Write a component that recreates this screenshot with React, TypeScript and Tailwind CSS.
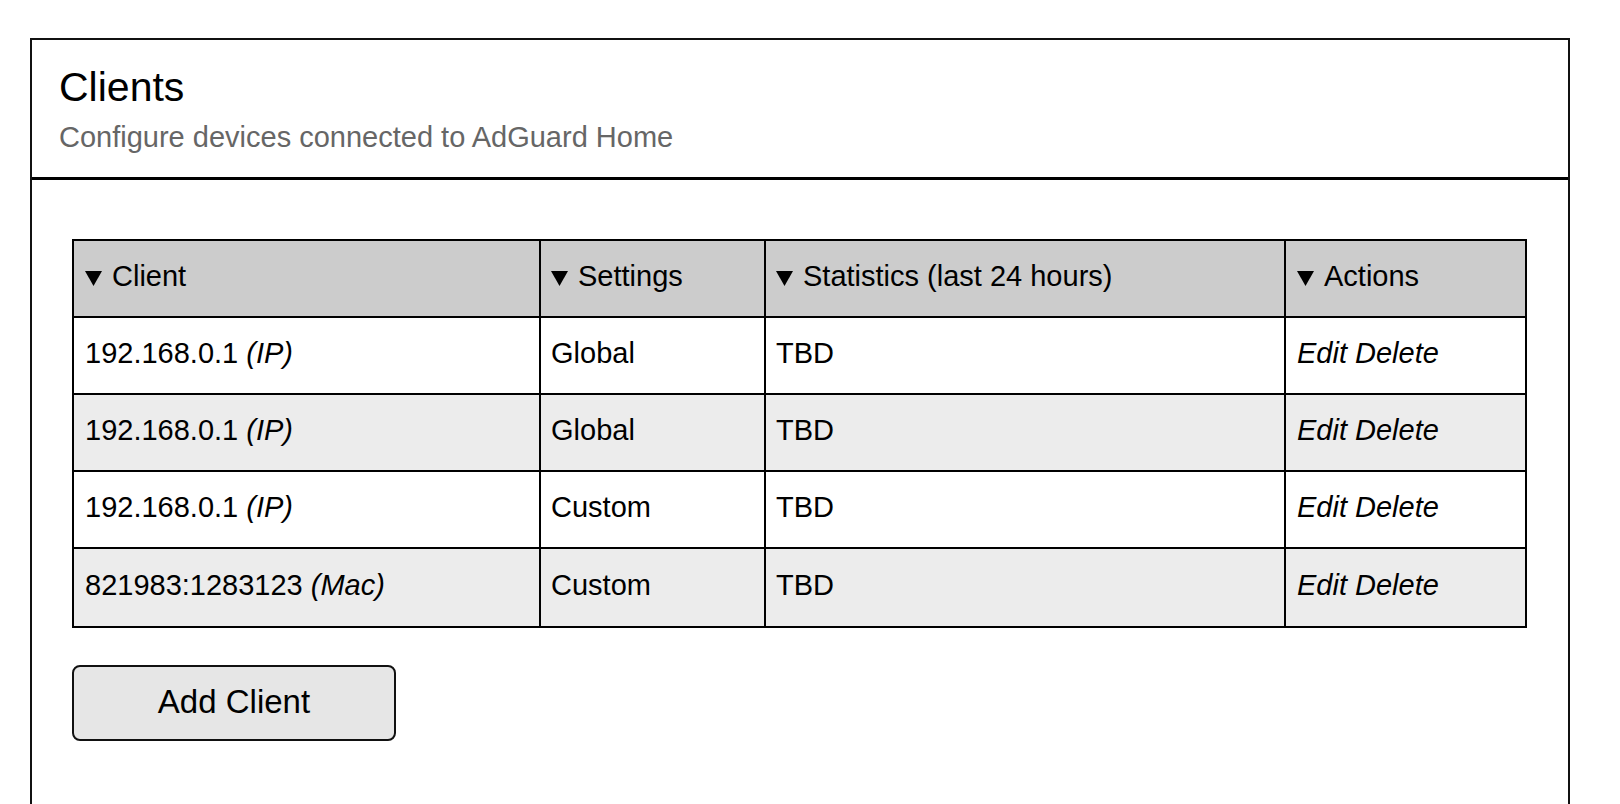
import React from "react";

const Tri = () => (
  <svg width="17" height="15" viewBox="0 0 17 15" className="inline-block mr-[10px] align-baseline">
    <polygon points="0,0 17,0 8.5,15" fill="#000" />
  </svg>
);

type Row = { client: string; kind: string; settings: string };

const rows: Row[] = [
  { client: "192.168.0.1", kind: "(IP)", settings: "Global" },
  { client: "192.168.0.1", kind: "(IP)", settings: "Global" },
  { client: "192.168.0.1", kind: "(IP)", settings: "Custom" },
  { client: "821983:1283123", kind: "(Mac)", settings: "Custom" },
];

export default function App() {
  return (
    <div
      className="min-h-screen w-full bg-white text-black overflow-hidden"
      style={{ fontFamily: '"Liberation Sans", Arial, Helvetica, sans-serif' }}
    >
      <div className="ml-[30px] mt-[38px] w-[1540px] min-h-[800px] border-2 border-[#111]">
        <div className="pl-[27px] pt-[27px] pb-[25px] border-b-[3px] border-black">
          <div className="text-[41px] leading-none text-black">Clients</div>
          <div className="mt-[15px] text-[29px] leading-none text-[#666]">
            Configure devices connected to AdGuard Home
          </div>
        </div>
        <div className="px-[40px] pt-[59px]">
          <div className="w-[1455px] border-2 border-black text-[29px] leading-none">
            <div className="flex h-[75px] bg-[#cccccc]">
              <div className="w-[465px] flex items-center pl-[11px] pb-[4px]">
                <span><Tri />Client</span>
              </div>
              <div className="w-[225px] border-l-2 border-black flex items-center pl-[10px] pb-[4px]">
                <span><Tri />Settings</span>
              </div>
              <div className="w-[520px] border-l-2 border-black flex items-center pl-[10px] pb-[4px]">
                <span><Tri />Statistics (last 24 hours)</span>
              </div>
              <div className="flex-1 border-l-2 border-black flex items-center pl-[11px] pb-[4px]">
                <span><Tri />Actions</span>
              </div>
            </div>
            {rows.map((r, i) => (
              <div
                key={i}
                className={`flex border-t-2 border-black ${i === rows.length - 1 ? "h-[79px]" : "h-[77px]"} ${i % 2 === 1 ? "bg-[#ececec]" : "bg-white"}`}
              >
                <div className="w-[465px] flex items-center pl-[11px] pb-[4px]">
                  <span>
                    {r.client} <i>{r.kind}</i>
                  </span>
                </div>
                <div className="w-[225px] border-l-2 border-black flex items-center pl-[10px] pb-[4px]">
                  {r.settings}
                </div>
                <div className="w-[520px] border-l-2 border-black flex items-center pl-[10px] pb-[4px]">
                  TBD
                </div>
                <div className="flex-1 border-l-2 border-black flex items-center pl-[11px] pb-[4px]">
                  <i>Edit Delete</i>
                </div>
              </div>
            ))}
          </div>
          <button className="mt-[37px] w-[324px] h-[76px] rounded-[8px] border-2 border-[#111] bg-[#e6e6e6] text-[33px] leading-none text-black pb-[4px]">
            Add Client
          </button>
        </div>
      </div>
    </div>
  );
}
